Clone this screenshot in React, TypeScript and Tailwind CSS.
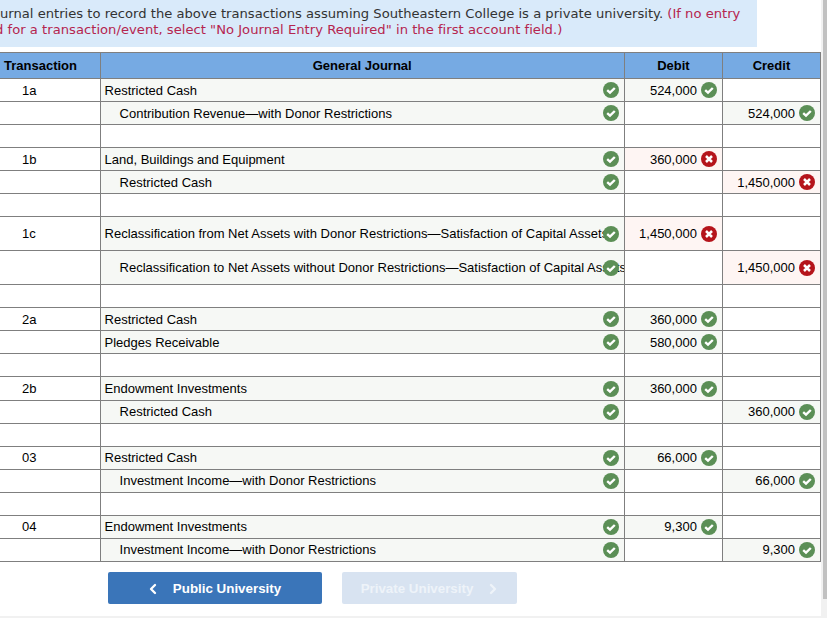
import { ChevronLeft, ChevronRight } from "lucide-react";

type Mark = "ok" | "bad";
type Row = {
  tx?: string;
  account?: string;
  indent?: boolean;
  debit?: string;
  debitMark?: Mark;
  credit?: string;
  creditMark?: Mark;
  height?: string;
};

const rows: Row[] = [
  { tx: "1a", account: "Restricted Cash", debit: "524,000", debitMark: "ok" },
  { account: "Contribution Revenue—with Donor Restrictions", indent: true, credit: "524,000", creditMark: "ok" },
  {},
  { tx: "1b", account: "Land, Buildings and Equipment", debit: "360,000", debitMark: "bad" },
  { account: "Restricted Cash", indent: true, credit: "1,450,000", creditMark: "bad" },
  {},
  { tx: "1c", account: "Reclassification from Net Assets with Donor Restrictions—Satisfaction of Capital Assets", debit: "1,450,000", debitMark: "bad", height: "h-[34px]" },
  { account: "Reclassification to Net Assets without Donor Restrictions—Satisfaction of Capital Assets", indent: true, credit: "1,450,000", creditMark: "bad", height: "h-[34px]" },
  {},
  { tx: "2a", account: "Restricted Cash", debit: "360,000", debitMark: "ok" },
  { account: "Pledges Receivable", debit: "580,000", debitMark: "ok" },
  {},
  { tx: "2b", account: "Endowment Investments", debit: "360,000", debitMark: "ok", height: "h-[24px]" },
  { account: "Restricted Cash", indent: true, credit: "360,000", creditMark: "ok" },
  {},
  { tx: "03", account: "Restricted Cash", debit: "66,000", debitMark: "ok" },
  { account: "Investment Income—with Donor Restrictions", indent: true, credit: "66,000", creditMark: "ok" },
  {},
  { tx: "04", account: "Endowment Investments", debit: "9,300", debitMark: "ok" },
  { account: "Investment Income—with Donor Restrictions", indent: true, credit: "9,300", creditMark: "ok" },
];

function MarkIcon({ mark }: { mark: Mark }) {
  if (mark === "ok") {
    return (
      <svg viewBox="0 0 16 16" className="w-4 h-4 shrink-0">
        <circle cx="8" cy="8" r="8" fill="#5b8f56" />
        <path d="M4.2 8.2 L7 10.7 L11.8 6" fill="none" stroke="#fff" strokeWidth="2.4" />
      </svg>
    );
  }
  return (
    <svg viewBox="0 0 16 16" className="w-4 h-4 shrink-0">
      <circle cx="8" cy="8" r="8" fill="#b5141b" />
      <path d="M5 5 L11 11 M11 5 L5 11" fill="none" stroke="#fff" strokeWidth="2.5" />
    </svg>
  );
}

function AmountCell({ value, mark, nudge }: { value?: string; mark?: Mark; nudge: string }) {
  const bg = mark === "ok" ? "bg-[#f6f8f5]" : mark === "bad" ? "bg-[#fef5f3]" : "bg-white";
  return (
    <td className={`border border-[#7f7f7f] p-0 ${bg}`}>
      {value && mark && (
        <div className="flex items-center justify-end gap-1 pr-[5px]">
          <span className={nudge}>{value}</span>
          <MarkIcon mark={mark} />
        </div>
      )}
    </td>
  );
}

export default function App() {
  return (
    <div className="h-[618px] w-[827px] overflow-hidden flex bg-white font-['Liberation_Sans',sans-serif] text-black">
      <div className="w-[821px] shrink-0">
        <div className="h-[616px]">
          <div className="w-[757px] h-[47px] bg-[#d9eafa] pt-[6px] overflow-hidden whitespace-nowrap font-['DejaVu_Sans',sans-serif] text-[13.13px] leading-[16px] text-[#333]">
            <div>
              urnal entries to record the above transactions assuming Southeastern College is a private university.{" "}
              <span className="text-[#b5254f]">(If no entry</span>
            </div>
            <div className="text-[#b5254f] tracking-[0.02px] -ml-[5px]">d for a transaction/event, select "No Journal Entry Required" in the first account field.)</div>
          </div>

          <table className="mt-[5px] w-[821px] table-fixed border-collapse text-[13px]">
            <colgroup>
              <col className="w-[100px]" />
              <col className="w-[524px]" />
              <col className="w-[98px]" />
              <col className="w-[98px]" />
            </colgroup>
            <thead>
              <tr className="h-[26px] bg-[#76aae3] font-bold">
                <th className="border border-l-0 border-[#7f7f7f] pl-1 text-left">Transaction</th>
                <th className="border border-[#7f7f7f]">General Journal</th>
                <th className="border border-[#7f7f7f]">Debit</th>
                <th className="border border-[#7f7f7f]">Credit</th>
              </tr>
            </thead>
            <tbody>
              {rows.map((row, i) => {
                // rows below the 24px one sit a pixel higher in the cell
                const nudge = i > 12 ? "" : "pt-px";
                return (
                  <tr key={i} className={row.height ?? "h-[23px]"}>
                    <td className={`border border-l-0 border-[#7f7f7f] p-0 pl-[22px] ${nudge}`}>{row.tx}</td>
                    <td className={`border border-[#7f7f7f] p-0 ${row.account ? "bg-[#f6f8f5]" : "bg-white"}`}>
                      {row.account && (
                        <div className="relative">
                          <div className={`overflow-hidden whitespace-nowrap ${nudge} ${row.indent ? "pl-[19px]" : "pl-1"}`}>{row.account}</div>
                          <div className="absolute right-[5px] top-1/2 -translate-y-1/2">
                            <MarkIcon mark="ok" />
                          </div>
                        </div>
                      )}
                    </td>
                    <AmountCell value={row.debit} mark={row.debitMark} nudge={nudge} />
                    <AmountCell value={row.credit} mark={row.creditMark} nudge={nudge} />
                  </tr>
                );
              })}
            </tbody>
          </table>

          <div className="mt-[10px] ml-[108px] flex gap-5 text-[13.35px] font-bold text-white">
            <button className="w-[214px] h-8 pr-[4px] pt-[2px] rounded-[2px] bg-[#3a75b9] flex items-center justify-center gap-[12px]">
              <ChevronLeft size={16} strokeWidth={3.5} />
              Public University
            </button>
            <button className="w-[175px] h-8 pl-[3px] pt-[2px] rounded-[2px] bg-[#d8e3f1] text-[#eef3f9] flex items-center justify-center gap-[12px]">
              Private University
              <ChevronRight size={16} strokeWidth={3.5} />
            </button>
          </div>
        </div>
        <div className="h-[2px] bg-[#f1f1f1]" />
      </div>
      <div className="w-[6px] h-[618px] bg-[#f1f1f1] pl-[2px]">
        <div className="w-full h-[599px] bg-[#c1c1c1]" />
      </div>
    </div>
  );
}
